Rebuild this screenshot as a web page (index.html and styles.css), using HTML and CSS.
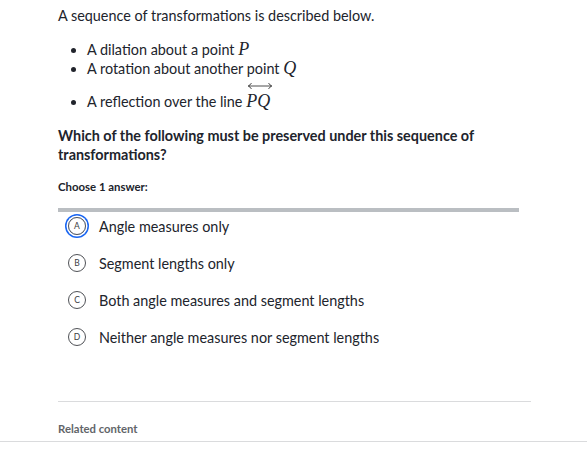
FILE: index.html
```html
<!DOCTYPE html>
<html>
<head>
<meta charset="utf-8">
<link rel="stylesheet" href="styles.css">
</head>
<body>
<div class="page">
  <div class="content">
    <p class="intro">A sequence of transformations is described below.</p>
    <ul class="steps">
      <li>A dilation about a point <span class="math">P</span></li>
      <li>A rotation about another point <span class="math">Q</span></li>
      <li class="tall">A reflection over the line <span class="math line"><svg class="arrow" width="26" height="8" viewBox="0 0 26 8"><path d="M1.5 4 H24.5 M4.5 1 Q3 3.4 1.2 4 Q3 4.6 4.5 7 M21.5 1 Q23 3.4 24.8 4 Q23 4.6 21.5 7" fill="none" stroke="#222" stroke-width="0.8"/></svg><span class="pq">PQ</span></span></li>
    </ul>
    <p class="question">Which of the following must be preserved under this sequence of transformations?</p>
    <p class="choose">Choose 1 answer:</p>
    <div class="choices">
      <div class="choice selected"><span class="letter">A</span><span class="label">Angle measures only</span></div>
      <div class="choice"><span class="letter">B</span><span class="label">Segment lengths only</span></div>
      <div class="choice"><span class="letter">C</span><span class="label">Both angle measures and segment lengths</span></div>
      <div class="choice"><span class="letter">D</span><span class="label">Neither angle measures nor segment lengths</span></div>
    </div>
    <div class="related">Related content</div>
  </div>
  <div class="bottom-rule"></div>
</div>
</body>
</html>
```
FILE: styles.css
```css
html, body {
  margin: 0;
  padding: 0;
  background: #fff;
}
body {
  font-family: Lato, "Noto Sans", sans-serif;
  color: #21242c;
}
.page {
  width: 587px;
  height: 452px;
  overflow: hidden;
}
.content {
  margin-left: 58px;
  width: 473px;
  padding-top: 6px;
}
.intro {
  margin: 0;
  font-size: 14.4px;
  line-height: 19px;
}
.steps {
  margin: 15px 0 0 0;
  padding-left: 29px;
  font-size: 14.4px;
  line-height: 19px;
}
.steps li {
  line-height: 19px;
}
.steps li.tall {
  margin-top: 4px;
}
.math {
  font-family: "Liberation Serif", "DejaVu Serif", serif;
  font-style: italic;
  font-size: 18px;
}
.math.line {
  display: inline-block;
  line-height: 19px;
}
.arrow {
  display: block;
  margin: 0 0 2px 1px;
}
.pq {
  display: block;
}
.question {
  margin: 15px 0 0 0;
  font-size: 14.4px;
  font-weight: 700;
  line-height: 19px;
}
.choose {
  margin: 15px 0 0 0;
  font-size: 11.4px;
  font-weight: 700;
  line-height: 16px;
}
.choices {
  margin-top: 13px;
  width: 461px;
  border-top: 4px solid #babec2;
}
.choice {
  display: flex;
  align-items: center;
  height: 37px;
  gap: 13px;
  padding-left: 10px;
}
.choices .choice:first-child {
  height: 28px;
  margin-bottom: 4.5px;
}
.letter {
  box-sizing: border-box;
  width: 18px;
  height: 18px;
  border: 1px solid #4f5156;
  border-radius: 50%;
  font-size: 8.5px;
  font-weight: 400;
  display: flex;
  align-items: center;
  justify-content: center;
  color: #3b3d42;
  flex: none;
}
.selected .letter {
  box-shadow: 0 0 0 1.5px #fff, 0 0 0 3px #1865f2;
}
.label {
  font-size: 14.4px;
  line-height: 19px;
}
.related {
  margin-top: 45px;
  border-top: 1px solid #dadbdd;
  padding-top: 20px;
  font-size: 11.3px;
  font-weight: 700;
  color: #626569;
  line-height: 14px;
  padding-bottom: 5px;
}
.bottom-rule {
  border-top: 1px solid #dadbdd;
}
```
